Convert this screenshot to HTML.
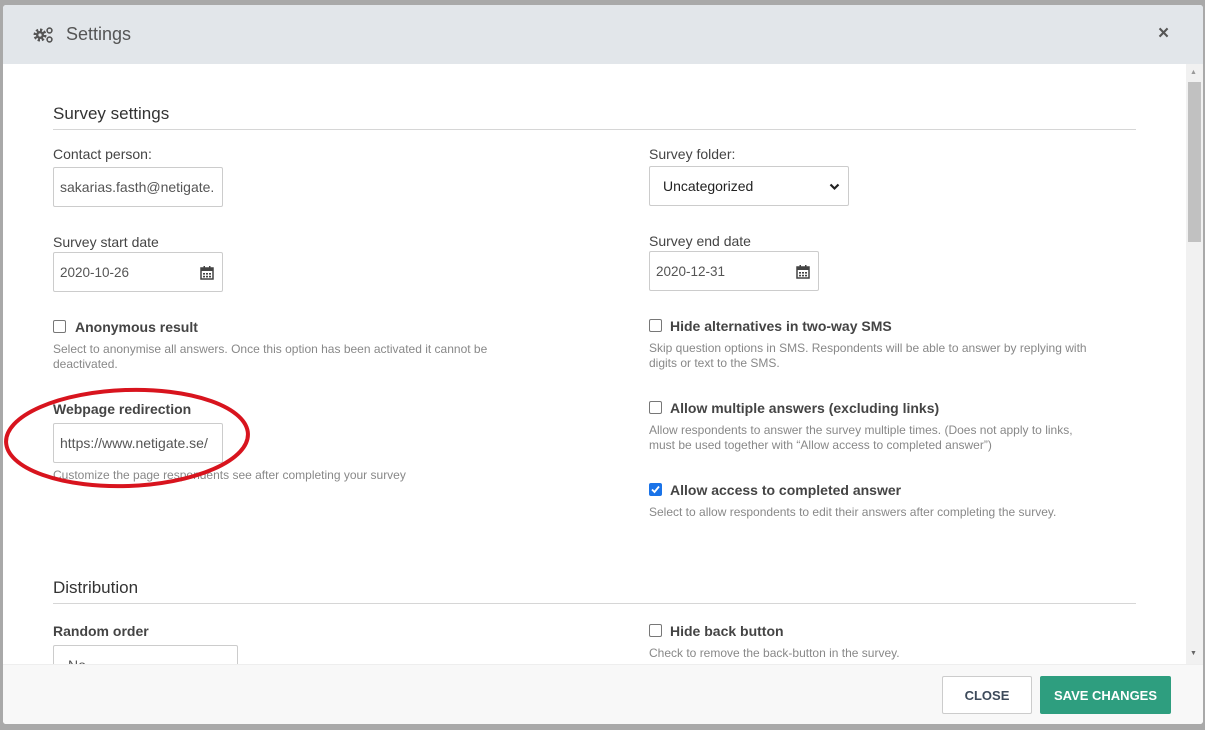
<!DOCTYPE html>
<html><head><meta charset="utf-8"><style>
*{box-sizing:border-box;margin:0;padding:0}
body{width:1205px;height:730px;background:#a9a9a9;font-family:"Liberation Sans",sans-serif;position:relative;overflow:hidden;color:#444}
.modal{position:absolute;left:3px;top:5px;width:1200px;height:719px;background:#fff;border-radius:3px;overflow:hidden}
.hdr{position:absolute;left:0;top:0;width:1200px;height:59px;background:#e2e6ea}
.a{position:absolute;white-space:nowrap}
.lbl{font-size:14px;color:#444}
.lblb{font-size:14px;color:#444;font-weight:bold}
.help{font-size:12px;color:#888;line-height:15px;white-space:normal}
.h2{font-size:17px;color:#333}
.line{position:absolute;height:1px;background:#d6d6d6}
.inp{position:absolute;border:1px solid #ccc;border-radius:2px;background:#fff;font-size:14px;color:#555;padding-left:6px;display:flex;align-items:center;overflow:hidden;white-space:nowrap}
.cb{position:absolute;width:13px;height:13px;border:1px solid #777;border-radius:2px;background:#fff}
.cal{position:absolute;width:14px;height:14px}
</style></head><body>
<div class="modal">
<div class="hdr"></div>
<svg class="a" style="left:30px;top:21px" width="22" height="18" viewBox="0 0 22 18"><circle cx="7" cy="9" r="5" fill="none" stroke="#555" stroke-width="3" stroke-dasharray="2.2 1.7"/><circle cx="7" cy="9" r="4" fill="#555"/><circle cx="7" cy="9" r="1.6" fill="#e2e6ea"/><circle cx="16.5" cy="4.5" r="2.4" fill="none" stroke="#555" stroke-width="1.6"/><circle cx="16.5" cy="13.5" r="2.4" fill="none" stroke="#555" stroke-width="1.6"/></svg>
<div class="a" style="left:63px;top:19px;font-size:18px;color:#555">Settings</div>
<div class="a" style="left:1155px;top:18px;font-size:19px;color:#555;font-weight:bold">×</div>

<div class="a h2" style="left:50px;top:99px">Survey settings</div>
<div class="line" style="left:50px;top:124px;width:1083px"></div>

<div class="a lbl" style="left:50px;top:141px">Contact person:</div>
<div class="inp" style="left:50px;top:162px;width:170px;height:40px">sakarias.fasth@netigate.</div>
<div class="a lbl" style="left:646px;top:141px">Survey folder:</div>
<div class="inp" style="left:646px;top:161px;width:200px;height:40px;padding-left:13px;color:#222">Uncategorized<svg style="position:absolute;right:8px;top:16px" width="11" height="8" viewBox="0 0 11 8"><path d="M1.5 1.5 5.5 5.5 9.5 1.5" stroke="#222" stroke-width="2.2" fill="none"/></svg></div>

<div class="a lbl" style="left:50px;top:229px">Survey start date</div>
<div class="inp" style="left:50px;top:247px;width:170px;height:40px;font-size:13.5px">2020-10-26<svg class="cal" style="left:146px;top:13px" viewBox="0 0 14 14"><rect x="1" y="2" width="12" height="11" fill="none" stroke="#444" stroke-width="1.5"/><rect x="1" y="2" width="12" height="3" fill="#444"/><rect x="3.5" y="0" width="1.5" height="3" fill="#444"/><rect x="9" y="0" width="1.5" height="3" fill="#444"/><g fill="#444"><rect x="3" y="7" width="2" height="1.6"/><rect x="6" y="7" width="2" height="1.6"/><rect x="9" y="7" width="2" height="1.6"/><rect x="3" y="9.8" width="2" height="1.6"/><rect x="6" y="9.8" width="2" height="1.6"/><rect x="9" y="9.8" width="2" height="1.6"/></g></svg></div>
<div class="a lbl" style="left:646px;top:228px">Survey end date</div>
<div class="inp" style="left:646px;top:246px;width:170px;height:40px;font-size:13.5px">2020-12-31<svg class="cal" style="left:146px;top:13px" viewBox="0 0 14 14"><rect x="1" y="2" width="12" height="11" fill="none" stroke="#444" stroke-width="1.5"/><rect x="1" y="2" width="12" height="3" fill="#444"/><rect x="3.5" y="0" width="1.5" height="3" fill="#444"/><rect x="9" y="0" width="1.5" height="3" fill="#444"/><g fill="#444"><rect x="3" y="7" width="2" height="1.6"/><rect x="6" y="7" width="2" height="1.6"/><rect x="9" y="7" width="2" height="1.6"/><rect x="3" y="9.8" width="2" height="1.6"/><rect x="6" y="9.8" width="2" height="1.6"/><rect x="9" y="9.8" width="2" height="1.6"/></g></svg></div>

<div class="cb" style="left:50px;top:315px"></div>
<div class="a lblb" style="left:72px;top:314px">Anonymous result</div>
<div class="a help" style="left:50px;top:337px;width:445px">Select to anonymise all answers. Once this option has been activated it cannot be deactivated.</div>
<div class="cb" style="left:646px;top:314px"></div>
<div class="a lblb" style="left:667px;top:313px">Hide alternatives in two-way SMS</div>
<div class="a help" style="left:646px;top:336px;width:445px">Skip question options in SMS. Respondents will be able to answer by replying with digits or text to the SMS.</div>

<div class="a lblb" style="left:50px;top:396px">Webpage redirection</div>
<div class="inp" style="left:50px;top:418px;width:170px;height:40px">https://www.netigate.se/</div>
<div class="a help" style="left:50px;top:463px">Customize the page respondents see after completing your survey</div>

<div class="cb" style="left:646px;top:396px"></div>
<div class="a lblb" style="left:667px;top:395px">Allow multiple answers (excluding links)</div>
<div class="a help" style="left:646px;top:418px;width:450px">Allow respondents to answer the survey multiple times. (Does not apply to links, must be used together with “Allow access to completed answer”)</div>

<div class="cb" style="left:646px;top:478px;background:#1a73e8;border-color:#1a73e8"><svg style="position:absolute;left:0;top:0" width="11" height="11" viewBox="0 0 11 11"><path d="M2 5.5 4.5 8 9 2.5" stroke="#fff" stroke-width="1.8" fill="none"/></svg></div>
<div class="a lblb" style="left:667px;top:477px">Allow access to completed answer</div>
<div class="a help" style="left:646px;top:500px">Select to allow respondents to edit their answers after completing the survey.</div>

<div class="a h2" style="left:50px;top:573px">Distribution</div>
<div class="line" style="left:50px;top:598px;width:1083px"></div>
<div class="a lblb" style="left:50px;top:618px">Random order</div>
<div class="inp" style="left:50px;top:640px;width:185px;height:40px;padding-left:14px">No</div>
<div class="cb" style="left:646px;top:619px"></div>
<div class="a lblb" style="left:667px;top:618px">Hide back button</div>
<div class="a help" style="left:646px;top:641px">Check to remove the back-button in the survey.</div>

<svg class="a" style="left:0;top:378px" width="250" height="110" viewBox="0 0 250 110"><ellipse cx="124" cy="55" rx="121" ry="48" fill="none" stroke="#d8141e" stroke-width="4" transform="rotate(-2 124 55)"/></svg>

<div class="a" style="left:1183px;top:59px;width:17px;height:600px;background:#f1f1f1"></div>
<div class="a" style="left:1185px;top:77px;width:13px;height:160px;background:#c1c1c1"></div>
<div class="a" style="left:1187px;top:64px;font-size:7px;color:#999">▲</div>
<div class="a" style="left:1187px;top:645px;font-size:7px;color:#666">▼</div>

<div class="a" style="left:0;top:659px;width:1200px;height:60px;background:#f8f8f8;border-top:1px solid #eee"></div>
<div class="a" style="left:939px;top:671px;width:90px;height:38px;border:1px solid #ccc;border-radius:2px;background:#fff;font-size:13px;font-weight:bold;color:#3d4a5a;display:flex;align-items:center;justify-content:center">CLOSE</div>
<div class="a" style="left:1037px;top:671px;width:131px;height:38px;border-radius:2px;background:#2e9e7f;font-size:13px;font-weight:bold;color:#fff;display:flex;align-items:center;justify-content:center">SAVE CHANGES</div>
</div>
</body></html>
